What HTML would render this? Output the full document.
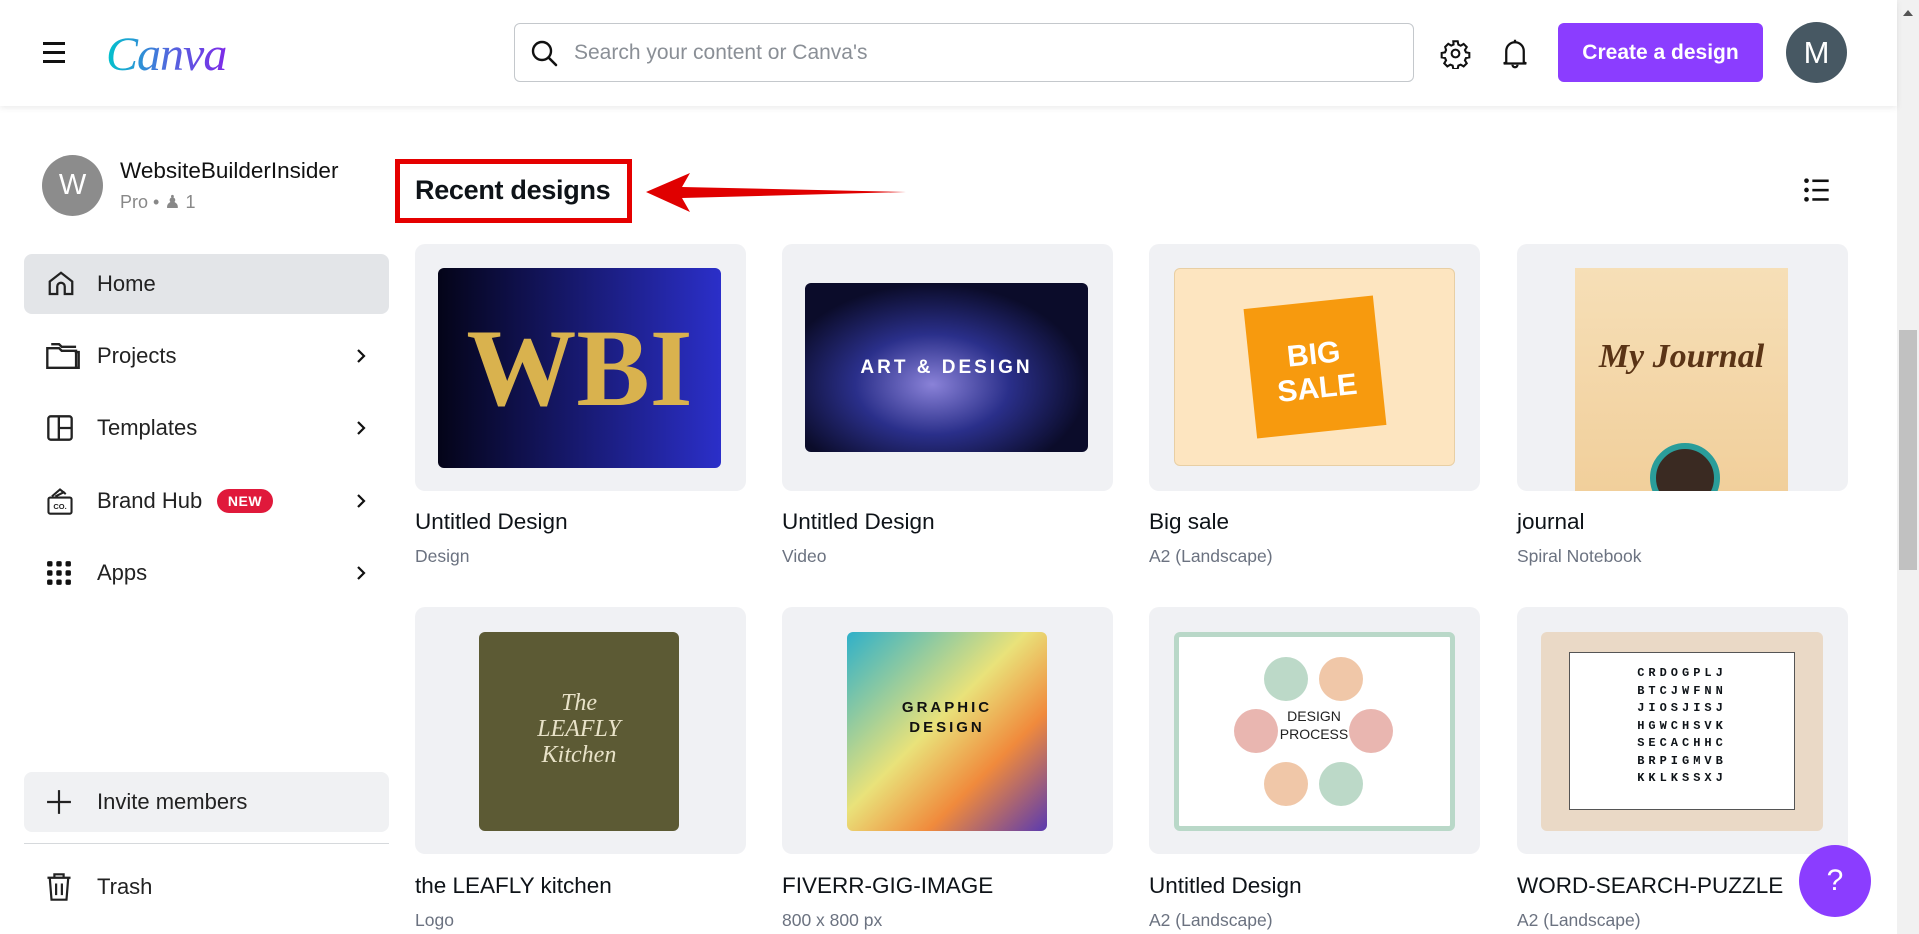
<!DOCTYPE html>
<html><head><meta charset="utf-8"><style>
*{box-sizing:border-box;margin:0;padding:0}
body{width:1919px;height:934px;overflow:hidden;background:#fff;font-family:"Liberation Sans",sans-serif;color:#0e1318;position:relative}
.a{position:absolute}
.hdr{left:0;top:0;width:1897px;height:106px;background:#fff;box-shadow:0 2px 6px rgba(0,0,0,.08);z-index:2}
.nav{left:24px;width:365px;height:60px;border-radius:8px}
.nav .t{position:absolute;left:73px;top:50%;transform:translateY(-50%);font-size:22px;color:#222}
.nav .ic{position:absolute;left:22px;top:50%;transform:translateY(-50%)}
.nav .ch{position:absolute;left:330px;top:50%;transform:translateY(-50%)}
.card{width:331px;height:247px;background:#f0f1f4;border-radius:10px;overflow:hidden}
.tt{font-size:22.5px;color:#0e1318}
.st{font-size:17.5px;color:#6b7280}
</style></head><body>
<div class="a hdr">
  <div class="a" style="left:43px;top:42px;width:22px;height:3px;background:#111;box-shadow:0 9px 0 #111,0 18px 0 #111"></div>
  <div class="a" style="left:106px;top:27px;font-family:'Liberation Serif',serif;font-style:italic;font-size:48px;background:linear-gradient(90deg,#00c4cc,#4f6bdd,#7d2ae8);-webkit-background-clip:text;color:transparent;letter-spacing:-1px">Canva</div>
  <div class="a" style="left:514px;top:23px;width:900px;height:59px;border:1px solid #c4c8cc;border-radius:6px">
    <svg class="a" style="left:15px;top:15px" width="28" height="28" viewBox="0 0 28 28"><circle cx="12" cy="12" r="9" fill="none" stroke="#111" stroke-width="2.4"/><path d="M18.5 18.5L26 26" stroke="#111" stroke-width="2.6" stroke-linecap="round"/></svg>
    <div class="a" style="left:59px;top:17px;font-size:21px;color:#8a8f96">Search your content or Canva's</div>
  </div>
  <svg class="a" style="left:1440px;top:38px" width="31" height="31" viewBox="0 0 24 24" fill="none" stroke="#111" stroke-width="1.6"><circle cx="12" cy="12" r="3"/><path d="M10.3 2.5h3.4l.5 2.6 1.8.9 2.3-1.4 2.4 2.4-1.4 2.3.8 1.8 2.6.5v3.4l-2.6.5-.8 1.8 1.4 2.3-2.4 2.4-2.3-1.4-1.8.8-.5 2.6h-3.4l-.5-2.6-1.8-.8-2.3 1.4-2.4-2.4 1.4-2.3-.8-1.8-2.6-.5v-3.4l2.6-.5.8-1.8L4 6.9l2.4-2.4 2.3 1.4 1.8-.9z"/></svg>
  <svg class="a" style="left:1500px;top:37px" width="30" height="33" viewBox="0 0 24 26" fill="none" stroke="#111" stroke-width="1.8"><path d="M12 2v2M5 20V11a7 7 0 0 1 14 0v9l2 1H3z"/><path d="M10 22a2 2 0 0 0 4 0"/></svg>
  <div class="a" style="left:1558px;top:23px;width:205px;height:59px;background:#8b3dff;border-radius:6px;color:#fff;font-weight:bold;font-size:21px;text-align:center;line-height:59px">Create a design</div>
  <div class="a" style="left:1786px;top:22px;width:61px;height:61px;border-radius:50%;background:#475863;color:#fff;font-size:31px;text-align:center;line-height:61px">M</div>
</div>
<div class="a" style="left:1897px;top:0;width:22px;height:934px;background:#f1f1f1"></div>
<div class="a" style="left:1903px;top:10px;width:0;height:0;border-left:5px solid transparent;border-right:5px solid transparent;border-bottom:6px solid #555"></div>
<div class="a" style="left:1899px;top:330px;width:18px;height:240px;background:#c1c1c1"></div>
<div class="a" style="left:42px;top:155px;width:61px;height:61px;border-radius:50%;background:#8c8c8c;color:#fff;font-size:29px;text-align:center;line-height:61px">W</div>
<div class="a" style="left:120px;top:158px;font-size:22.5px;color:#111">WebsiteBuilderInsider</div>
<div class="a" style="left:120px;top:192px;font-size:18px;color:#888">Pro • &#9823; 1</div>
<div class="a nav" style="top:254px;background:#e3e5e8"><svg class="ic" width="30" height="30" viewBox="0 0 24 24" fill="none" stroke="#222" stroke-width="1.8"><path d="M3 20V10l9-7 9 7v10h-6v-6a3 3 0 0 0-6 0v6z"/></svg><span class="t">Home</span></div>
<div class="a nav" style="top:326px"><svg class="ic" width="34" height="30" viewBox="0 0 26 22" fill="none" stroke="#222" stroke-width="1.8"><path d="M1 5h9l2 2h11v13H1z M4 2h6l2 2h11"/><path d="M22 8h3v12h-3"/></svg><span class="t">Projects</span><svg class="ch" width="14" height="16" viewBox="0 0 14 16"><path d="M4 2l6 6-6 6" fill="none" stroke="#111" stroke-width="2.2"/></svg></div>
<div class="a nav" style="top:398px"><svg class="ic" width="28" height="28" viewBox="0 0 24 24" fill="none" stroke="#222" stroke-width="2"><rect x="2" y="2" width="20" height="20" rx="2"/><path d="M11 2v20M11 12h11"/></svg><span class="t">Templates</span><svg class="ch" width="14" height="16" viewBox="0 0 14 16"><path d="M4 2l6 6-6 6" fill="none" stroke="#111" stroke-width="2.2"/></svg></div>
<div class="a nav" style="top:471px"><svg class="ic" width="28" height="30" viewBox="0 0 24 26" fill="none" stroke="#222" stroke-width="1.8"><rect x="2" y="10" width="20" height="14" rx="1.5"/><path d="M5 9l7-6 5 4M8 9l8-4"/><text x="12" y="20" font-size="6.5" text-anchor="middle" fill="#222" stroke="none" font-family="Liberation Sans" font-weight="bold">CO.</text></svg><span class="t">Brand Hub</span><div class="a" style="left:193px;top:18px;width:56px;height:24px;border-radius:12px;background:#e0193b;color:#fff;font-weight:bold;font-size:14px;text-align:center;line-height:24px;letter-spacing:.5px">NEW</div><svg class="ch" width="14" height="16" viewBox="0 0 14 16"><path d="M4 2l6 6-6 6" fill="none" stroke="#111" stroke-width="2.2"/></svg></div>
<div class="a nav" style="top:543px"><svg class="ic" width="26" height="26" viewBox="0 0 24 24" fill="#111"><rect x="1" y="1" width="5" height="5" rx="1.5"/><rect x="9.5" y="1" width="5" height="5" rx="1.5"/><rect x="18" y="1" width="5" height="5" rx="1.5"/><rect x="1" y="9.5" width="5" height="5" rx="1.5"/><rect x="9.5" y="9.5" width="5" height="5" rx="1.5"/><rect x="18" y="9.5" width="5" height="5" rx="1.5"/><rect x="1" y="18" width="5" height="5" rx="1.5"/><rect x="9.5" y="18" width="5" height="5" rx="1.5"/><rect x="18" y="18" width="5" height="5" rx="1.5"/></svg><span class="t">Apps</span><svg class="ch" width="14" height="16" viewBox="0 0 14 16"><path d="M4 2l6 6-6 6" fill="none" stroke="#111" stroke-width="2.2"/></svg></div>
<div class="a nav" style="top:772px;background:#f0f1f3"><svg class="ic" width="26" height="26" viewBox="0 0 24 24"><path d="M12 1v22M1 12h22" stroke="#222" stroke-width="2"/></svg><span class="t">Invite members</span></div>
<div class="a" style="left:24px;top:843px;width:365px;height:1px;background:#d6d9dc"></div>
<div class="a nav" style="top:857px"><svg class="ic" width="26" height="30" viewBox="0 0 22 26" fill="none" stroke="#222" stroke-width="1.9"><path d="M1 5h20M7 5V2h8v3M3 5l1.5 19h13L19 5M8.5 10v10M13.5 10v10"/></svg><span class="t">Trash</span></div>
<div class="a" style="left:395px;top:159px;width:237px;height:64px;border:5px solid #e50000"></div>
<div class="a" style="left:415px;top:175px;font-size:27px;font-weight:bold;letter-spacing:-.3px">Recent designs</div>
<svg class="a" style="left:640px;top:170px" width="270" height="45" viewBox="0 0 270 45"><path d="M266 22L42 17L50 3L6 22L50 42L42 28Z" fill="#e00000"/></svg>
<svg class="a" style="left:1803px;top:176px" width="28" height="28" viewBox="0 0 24 24" fill="#111"><circle cx="3" cy="4" r="2"/><circle cx="3" cy="12" r="2"/><circle cx="3" cy="20" r="2"/><rect x="8" y="3" width="14" height="2.2"/><rect x="8" y="11" width="14" height="2.2"/><rect x="8" y="19" width="14" height="2.2"/></svg>
<div class="a card" style="left:415px;top:244px"><div class="a" style="left:23px;top:24px;width:283px;height:200px;border-radius:6px;background:linear-gradient(90deg,#040418,#2b2fc9);color:#d9b24e;font-family:'Liberation Serif',serif;font-weight:bold;font-size:110px;text-align:center;line-height:200px">WBI</div></div>
<div class="a card" style="left:782px;top:244px"><div class="a" style="left:23px;top:39px;width:283px;height:169px;border-radius:6px;background:radial-gradient(ellipse at 45% 60%,#8a82d8,#2a2f8a 35%,#0b0c2a 70%);color:#fff;font-size:19px;font-weight:bold;letter-spacing:3px;text-align:center;line-height:169px">ART &amp; DESIGN</div></div>
<div class="a card" style="left:1149px;top:244px"><div class="a" style="left:25px;top:24px;width:281px;height:198px;border-radius:6px;background:#fde5c0;border:1px solid #e8cfa4"><div class="a" style="left:75px;top:33px;width:130px;height:130px;background:#f79a0e;transform:rotate(-6deg);color:#fff;font-weight:bold;font-size:30px;text-align:center;padding-top:36px;line-height:34px">BIG<br>SALE</div></div></div>
<div class="a card" style="left:1517px;top:244px"><div class="a" style="left:58px;top:24px;width:213px;height:223px;background:linear-gradient(#f6dfb7,#f1cf9b);"><div class="a" style="left:0;top:70px;width:213px;text-align:center;font-family:'Liberation Serif',serif;font-style:italic;font-weight:bold;font-size:34px;color:#5a3416">My Journal</div><div class="a" style="left:75px;top:175px;width:70px;height:70px;border-radius:50%;background:#3a2a22;border:6px solid #2a9d9a"></div></div></div>
<div class="a tt" style="left:415px;top:509px">Untitled Design</div><div class="a st" style="left:415px;top:546px">Design</div>
<div class="a tt" style="left:782px;top:509px">Untitled Design</div><div class="a st" style="left:782px;top:546px">Video</div>
<div class="a tt" style="left:1149px;top:509px">Big sale</div><div class="a st" style="left:1149px;top:546px">A2 (Landscape)</div>
<div class="a tt" style="left:1517px;top:509px">journal</div><div class="a st" style="left:1517px;top:546px">Spiral Notebook</div>
<div class="a card" style="left:415px;top:607px"><div class="a" style="left:64px;top:25px;width:200px;height:199px;border-radius:6px;background:#5c5a34;color:#e8e2c8;font-family:'Liberation Serif',serif;font-style:italic;font-size:24px;text-align:center;padding-top:58px;line-height:26px">The<br>LEAFLY<br>Kitchen</div></div>
<div class="a card" style="left:782px;top:607px"><div class="a" style="left:65px;top:25px;width:200px;height:199px;border-radius:6px;background:linear-gradient(135deg,#2fb0c9,#e9e27a 45%,#f08a3c 70%,#5a3ab0);color:#111;font-weight:bold;font-size:15px;letter-spacing:3px;text-align:center;padding-top:66px;line-height:20px">GRAPHIC<br>DESIGN</div></div>
<div class="a card" style="left:1149px;top:607px"><div class="a" style="left:25px;top:25px;width:281px;height:199px;border-radius:6px;background:#fff;border:5px solid #b9d8c8"><div class="a" style="left:95px;top:70px;width:80px;text-align:center;font-size:14px;line-height:18px;color:#222">DESIGN<br>PROCESS</div><div class="a" style="left:85px;top:20px;width:44px;height:44px;border-radius:50%;background:#bcd9c8"></div><div class="a" style="left:140px;top:20px;width:44px;height:44px;border-radius:50%;background:#f0c7a8"></div><div class="a" style="left:55px;top:72px;width:44px;height:44px;border-radius:50%;background:#e9b6b0"></div><div class="a" style="left:170px;top:72px;width:44px;height:44px;border-radius:50%;background:#e9b6b0"></div><div class="a" style="left:85px;top:125px;width:44px;height:44px;border-radius:50%;background:#f0c7a8"></div><div class="a" style="left:140px;top:125px;width:44px;height:44px;border-radius:50%;background:#bcd9c8"></div></div></div>
<div class="a card" style="left:1517px;top:607px"><div class="a" style="left:24px;top:25px;width:282px;height:199px;border-radius:6px;background:#ead9c6"><div class="a" style="left:28px;top:20px;width:226px;height:158px;background:#fff;border:1px solid #555;font-family:'Liberation Mono',monospace;font-weight:bold;font-size:12px;line-height:17.5px;text-align:center;padding-top:12px;letter-spacing:4px">CRDOGPLJ<br>BTCJWFNN<br>JIOSJISJ<br>HGWCHSVK<br>SECACHHC<br>BRPIGMVB<br>KKLKSSXJ</div></div></div>
<div class="a tt" style="left:415px;top:873px">the LEAFLY kitchen</div><div class="a st" style="left:415px;top:910px">Logo</div>
<div class="a tt" style="left:782px;top:873px">FIVERR-GIG-IMAGE</div><div class="a st" style="left:782px;top:910px">800 x 800 px</div>
<div class="a tt" style="left:1149px;top:873px">Untitled Design</div><div class="a st" style="left:1149px;top:910px">A2 (Landscape)</div>
<div class="a tt" style="left:1517px;top:873px">WORD-SEARCH-PUZZLE</div><div class="a st" style="left:1517px;top:910px">A2 (Landscape)</div>
<div class="a" style="left:1799px;top:845px;width:72px;height:72px;border-radius:50%;background:#8b3dff;color:#fff;font-size:30px;text-align:center;line-height:72px">?</div>
</body></html>
